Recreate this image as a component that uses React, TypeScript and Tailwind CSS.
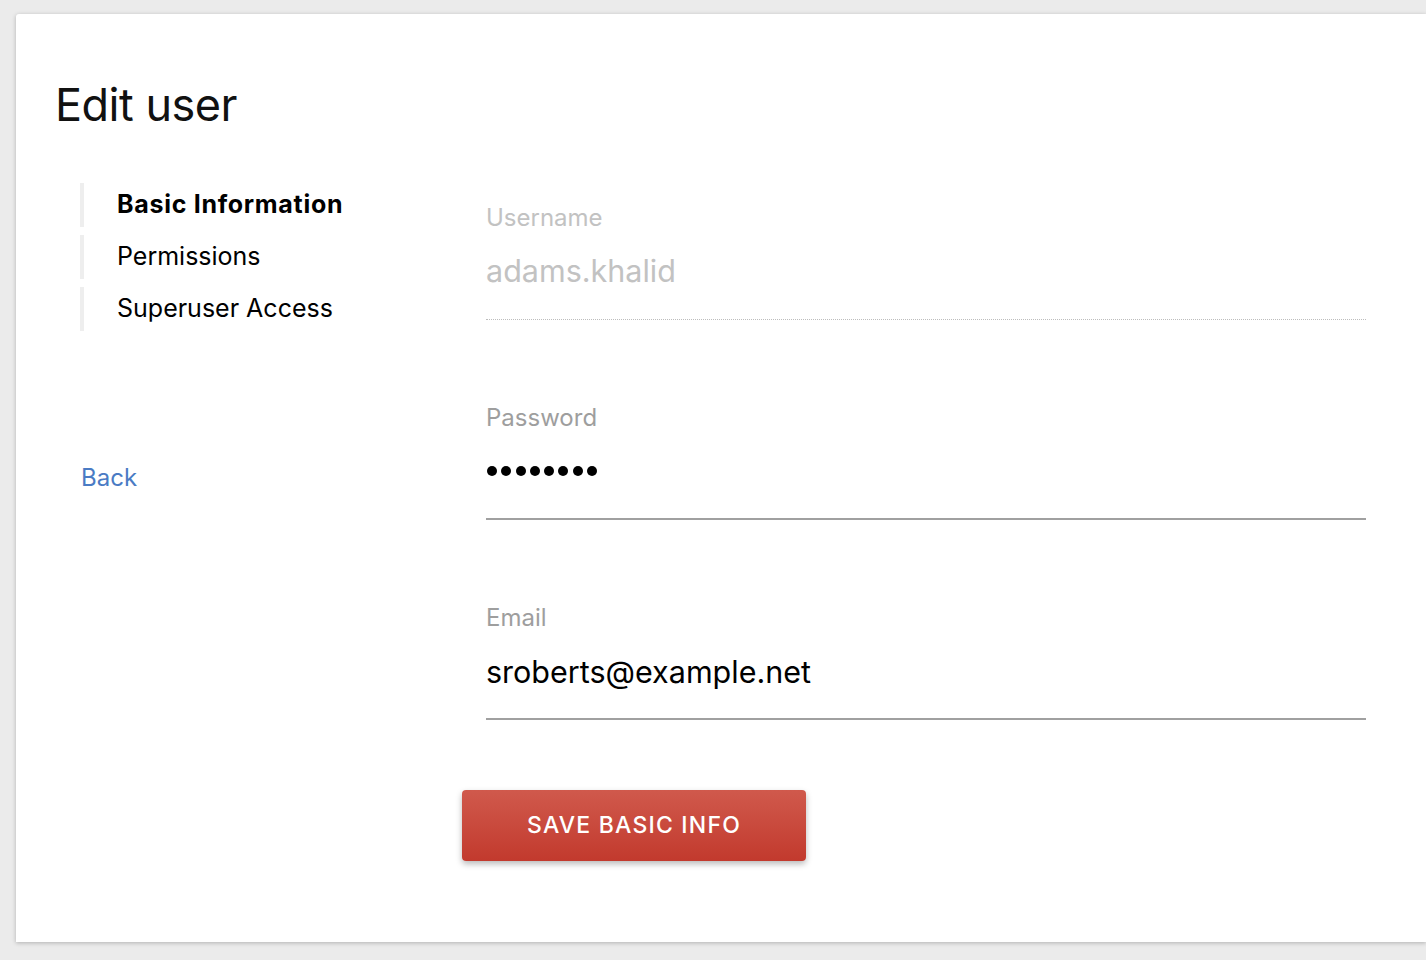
import { FC } from "react";

const fieldLabel = "text-[24px] leading-[30px]";
const navItem = "h-[44px] flex items-center border-l-4 border-[#eeeeee] pl-[33px] text-[25px] text-black";

const App: FC = () => {
  return (
    <div className="min-h-screen bg-[#ebebeb] pt-[14px] pl-[16px] font-['Inter','Roboto',sans-serif] overflow-hidden">
      <div className="h-[928px] bg-white rounded-tl-[3px] shadow-[0_1px_4px_rgba(0,0,0,0.25)] pl-[41px] pt-[63px]">
        <h1 className="-ml-[2px] text-[45px] leading-[56px] tracking-[-0.5px] text-[#111]">Edit user</h1>

        <div className="flex mt-[50px]">
          <div className="w-[405px] pl-[23px] flex flex-col">
            <nav className="flex flex-col gap-[8px]">
              <a className={`${navItem} font-bold tracking-[0.7px]`}>Basic Information</a>
              <a className={navItem}>Permissions</a>
              <a className={navItem}>Superuser Access</a>
            </nav>
            <a href="#" className="mt-[132px] pl-[1px] text-[24px] leading-[30px] text-[#4a7bc4]">
              Back
            </a>
          </div>

          <div className="flex-1 pt-[20px]">
            <div className="ml-[24px] w-[880px] h-[200px]">
              <div className={`${fieldLabel} text-[#c2c2c2]`}>Username</div>
              <div className="mt-[18px] text-[30.5px] leading-[40px] text-[#c2c2c2]">adams.khalid</div>
              <div className="mt-[28px] border-b border-dotted border-[#bdbdbd]" />
            </div>
            <div className="ml-[24px] w-[880px] h-[200px]">
              <div className={`${fieldLabel} text-[#9e9e9e]`}>Password</div>
              <div className="mt-[18px] h-[40px] flex items-center gap-[4.3px] pl-[1px]">
                {Array.from({ length: 8 }).map((_, i) => (
                  <span key={i} className="w-[10px] h-[10px] rounded-full bg-black" />
                ))}
              </div>
              <div className="mt-[27px] border-b-2 border-[#a0a0a0]" />
            </div>
            <div className="ml-[24px] w-[880px]">
              <div className={`${fieldLabel} text-[#9e9e9e]`}>Email</div>
              <div className="mt-[19px] text-[30.5px] leading-[40px] text-black">sroberts@example.net</div>
              <div className="mt-[26px] border-b-2 border-[#a0a0a0]" />
            </div>
            <button className="mt-[70px] w-[344px] h-[71px] rounded-[4px] bg-gradient-to-b from-[#d0594c] to-[#c2392d] text-white text-[23px] font-medium tracking-[1.2px] shadow-[0_3px_6px_rgba(0,0,0,0.28)]">
              SAVE BASIC INFO
            </button>
          </div>
        </div>
      </div>
    </div>
  );
};

export default App;
